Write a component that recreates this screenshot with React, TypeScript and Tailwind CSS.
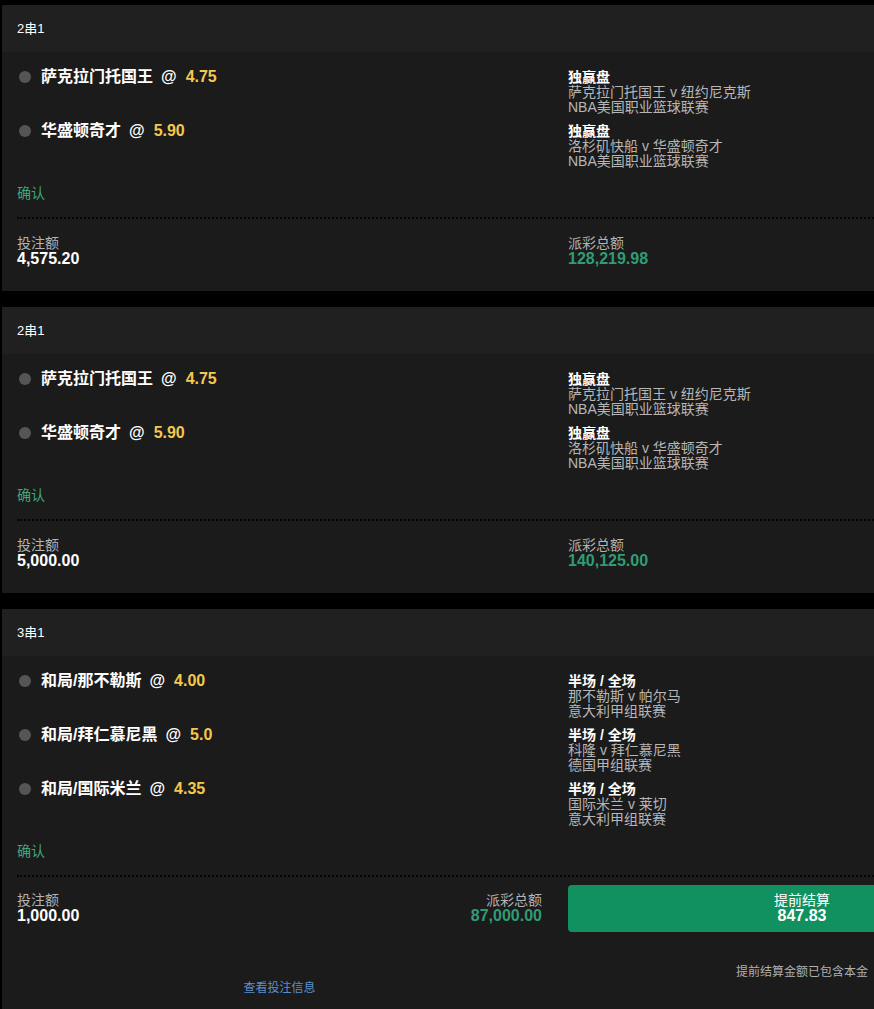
import React from 'react';

type Pick = {
  name: string;
  odds: string;
  market: string;
  match: string;
  league: string;
};

type Bet = {
  title: string;
  picks: Pick[];
  stake: string;
  payout: string;
  cashout?: string;
};

const bets: Bet[] = [
  {
    title: '2串1',
    picks: [
      { name: '萨克拉门托国王', odds: '4.75', market: '独赢盘', match: '萨克拉门托国王 v 纽约尼克斯', league: 'NBA美国职业篮球联赛' },
      { name: '华盛顿奇才', odds: '5.90', market: '独赢盘', match: '洛杉矶快船 v 华盛顿奇才', league: 'NBA美国职业篮球联赛' },
    ],
    stake: '4,575.20',
    payout: '128,219.98',
  },
  {
    title: '2串1',
    picks: [
      { name: '萨克拉门托国王', odds: '4.75', market: '独赢盘', match: '萨克拉门托国王 v 纽约尼克斯', league: 'NBA美国职业篮球联赛' },
      { name: '华盛顿奇才', odds: '5.90', market: '独赢盘', match: '洛杉矶快船 v 华盛顿奇才', league: 'NBA美国职业篮球联赛' },
    ],
    stake: '5,000.00',
    payout: '140,125.00',
  },
  {
    title: '3串1',
    picks: [
      { name: '和局/那不勒斯', odds: '4.00', market: '半场 / 全场', match: '那不勒斯 v 帕尔马', league: '意大利甲组联赛' },
      { name: '和局/拜仁慕尼黑', odds: '5.0', market: '半场 / 全场', match: '科隆 v 拜仁慕尼黑', league: '德国甲组联赛' },
      { name: '和局/国际米兰', odds: '4.35', market: '半场 / 全场', match: '国际米兰 v 莱切', league: '意大利甲组联赛' },
    ],
    stake: '1,000.00',
    payout: '87,000.00',
    cashout: '847.83',
  },
];

function PickRow({ pick }: { pick: Pick }) {
  return (
    <div className="flex items-start">
      <div className="w-[551px] flex items-center -mt-[2px]">
        <span className="ml-[2px] w-[12px] h-[12px] rounded-full bg-[#555555]" />
        <span className="ml-[10px] text-[16px] leading-[18px] font-bold text-white">{pick.name}</span>
        <span className="ml-[8px] text-[16px] leading-[18px] font-bold text-white">@</span>
        <span className="ml-[9px] text-[16px] leading-[18px] font-bold text-[#f4c84f]">{pick.odds}</span>
      </div>
      <div className="flex flex-col text-[14px] leading-[15px]">
        <span className="text-white font-bold">{pick.market}</span>
        <span className="text-[#b6b6b6]">{pick.match}</span>
        <span className="text-[#b6b6b6]">{pick.league}</span>
      </div>
    </div>
  );
}

function Amount({ label, value, green, right }: { label: string; value: string; green?: boolean; right?: boolean }) {
  return (
    <div className={right ? 'flex flex-col items-end' : 'flex flex-col'}>
      <span className="text-[14px] leading-[15px] text-[#b4b4b4]">{label}</span>
      <span className={green ? 'text-[16px] leading-[16px] font-bold text-[#309c74]' : 'text-[16px] leading-[16px] font-bold text-white'}>
        {value}
      </span>
    </div>
  );
}

function BetCard({ bet }: { bet: Bet }) {
  return (
    <div className="w-[1134px]">
      <div className="h-[47px] bg-[#202020] flex items-center px-[15px] text-[13px] text-white">{bet.title}</div>
      <div className="bg-[#1b1b1b] px-[15px] pt-[18px] pb-[24px]">
        <div className="flex flex-col gap-[9px]">
          {bet.picks.map((p, i) => (
            <PickRow key={i} pick={p} />
          ))}
        </div>
        <div className="mt-[17px] text-[14px] leading-[15px] text-[#3fa77c]">确认</div>
        <div className="mt-[16px] border-t-2 border-dotted border-[#050505]" />

        {bet.cashout ? (
          <>
            <div className="mt-[8px] flex items-center">
              <div className="w-[525px] flex justify-between">
                <Amount label="投注额" value={bet.stake} />
                <Amount label="派彩总额" value={bet.payout} green right />
              </div>
              <button className="ml-[26px] w-[468px] h-[47px] rounded-[4px] bg-[#11915f] flex flex-col items-center justify-center text-white">
                <span className="text-[14px] leading-[15px]">提前结算</span>
                <span className="text-[16px] leading-[16px] font-bold">{bet.cashout}</span>
              </button>
            </div>
            <div className="flex items-start">
              <div className="w-[525px] pt-[49px] text-center text-[12px] leading-[15px] text-[#5b8fcb]">查看投注信息</div>
              <div className="ml-[26px] w-[468px] pt-[33px] text-center text-[12px] leading-[15px] text-[#b0b0b0]">
                提前结算金额已包含本金
              </div>
            </div>
          </>
        ) : (
          <div className="mt-[17px] flex">
            <div className="w-[551px]">
              <Amount label="投注额" value={bet.stake} />
            </div>
            <Amount label="派彩总额" value={bet.payout} green />
          </div>
        )}
      </div>
    </div>
  );
}

export default function App() {
  return (
    <div
      className="w-[874px] h-[1009px] overflow-hidden bg-black pt-[5px] pl-[2px] flex flex-col gap-[16px]"
      style={{ fontFamily: '"Liberation Sans", "Noto Sans CJK SC", sans-serif' }}
    >
      {bets.map((b, i) => (
        <BetCard key={i} bet={b} />
      ))}
    </div>
  );
}
